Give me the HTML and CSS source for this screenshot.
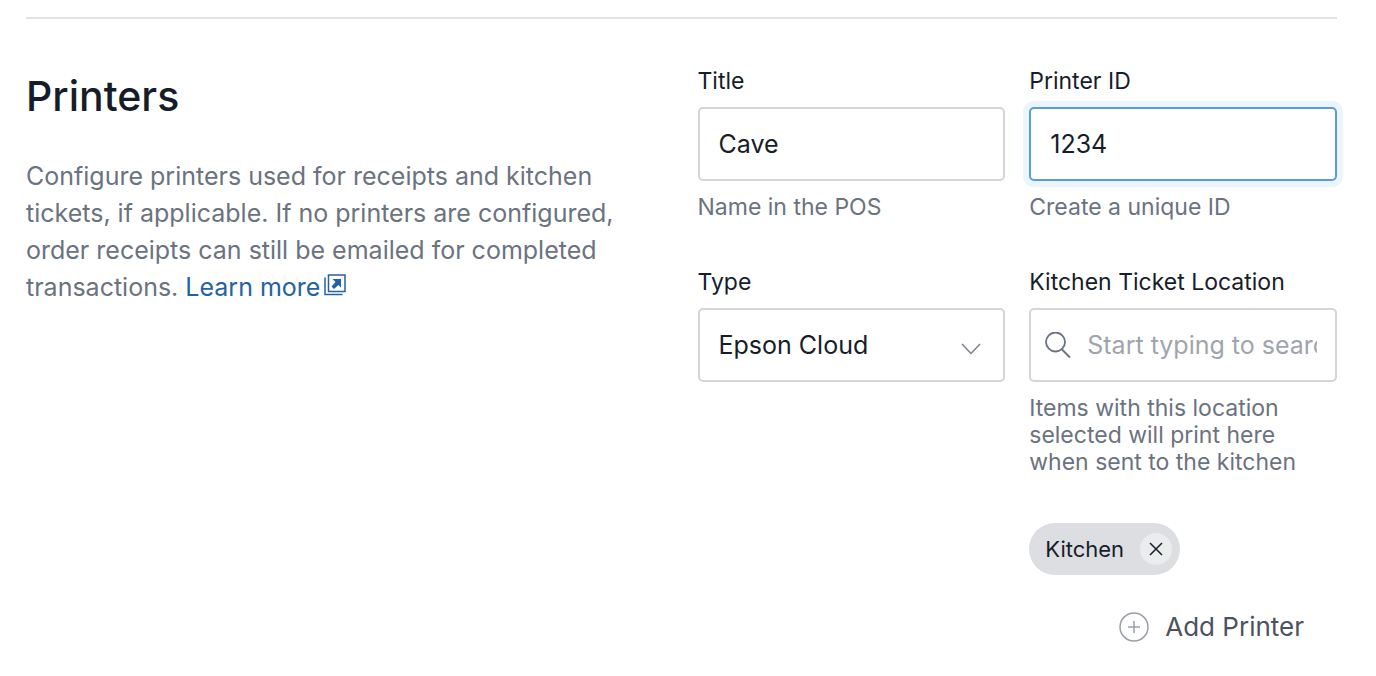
FILE: index.html
```html
<!DOCTYPE html>
<html lang="en">
<head>
  <meta charset="UTF-8" />
  <meta name="viewport" content="width=device-width, initial-scale=1" />
  <title>Printers</title>
  <link rel="stylesheet" href="styles.css">
</head>
<body>

  <section class="settings">
    <div class="intro">
      <h2>Printers</h2>
      <p>
        Configure printers used for receipts and kitchen tickets, if applicable.
        If no printers are configured, order receipts can still be emailed for
        completed transactions.
        <a href="#">Learn more<svg class="external" viewBox="0 0 22 22" aria-hidden="true">
          <path d="M4.500 1H21V17.500H4.500Z" fill="none" stroke="currentColor" stroke-width="1.500" />
          <path d="M1 3.500V20.500H18.500" fill="none" stroke="currentColor" stroke-width="1.500" />
          <path d="M8.500 5H17V13.500L14.500 11L10 15L7.500 12.500L11.500 8Z" fill="currentColor" />
        </svg></a>
      </p>
    </div>

    <form class="printer">
      <div class="field">
        <label for="title">Title</label>
        <input type="text" id="title" class="control" value="Cave" />
        <p class="hint">Name in the POS</p>
      </div>

      <div class="field">
        <label for="printerId">Printer ID</label>
        <input type="text" id="printerId" class="control active" value="1234" />
        <p class="hint">Create a unique ID</p>
      </div>

      <div class="field">
        <label for="type">Type</label>
        <div class="select-wrap">
          <select id="type" class="control">
            <option>Epson Cloud</option>
          </select>
          <svg class="chevron" viewBox="0 0 20 12" aria-hidden="true">
            <path d="M1 1L10 10.500L19 1" fill="none" stroke="currentColor" stroke-width="1.500" />
          </svg>
        </div>
      </div>

      <div class="field">
        <label for="location">Kitchen Ticket Location</label>
        <div class="control search">
          <svg viewBox="0 0 26 26" aria-hidden="true">
            <circle cx="10.500" cy="10" r="9.500" fill="none" stroke="currentColor" stroke-width="1.800" />
            <path d="M16.500 17L25 25.500" stroke="currentColor" stroke-width="2" />
          </svg>
          <input type="text" id="location" placeholder="Start typing to search" />
        </div>
        <p class="hint">Items with this location selected will print here when sent to the kitchen</p>
        <div class="chip">
          Kitchen
          <button type="button" aria-label="Remove Kitchen">
            <svg viewBox="0 0 14 14" aria-hidden="true">
              <path d="M1 1L13 13M13 1L1 13" stroke="currentColor" stroke-width="1.500" />
            </svg>
          </button>
        </div>
      </div>

      <button type="button" class="add">
        <svg viewBox="0 0 30 30" aria-hidden="true">
          <circle cx="15" cy="15" r="14" fill="none" stroke="currentColor" stroke-width="1.500" />
          <path d="M15 9V21M9 15H21" stroke="currentColor" stroke-width="1.500" />
        </svg>
        Add Printer
      </button>
    </form>
  </section>

</body>
</html>
```
FILE: styles.css
```css
* {
  box-sizing: border-box;
}

body {
  margin: 0;
  padding: 17px 39px 32px 26px;
  font-family: Inter, sans-serif;
  background: #fff;
  color: #161d2a;
}

.settings {
  display: grid;
  grid-template-columns: 1fr 1fr;
  gap: 32px;
  border-top: 2px solid #e2e3e6;
  padding-top: 48px;
}

h2 {
  margin: 4px 0 37px;
  font-size: 41px;
  line-height: 50px;
  font-weight: 500;
}

p {
  margin: 0;
}

.intro p {
  max-width: 600px;
  font-size: 25px;
  line-height: 37px;
  color: #6b7280;
}

.intro a {
  color: #2563a0;
  text-decoration: none;
}

.external {
  width: 22px;
  height: 22px;
  margin-left: 4px;
}

.printer {
  display: grid;
  grid-template-columns: 1fr 1fr;
  column-gap: 24px;
  row-gap: 47px;
}

.field {
  display: flex;
  flex-direction: column;
  min-width: 0;
}

label {
  margin-bottom: 11px;
  font-size: 23px;
  line-height: 29px;
}

.control {
  width: 100%;
  height: 74px;
  padding: 0 19px;
  border: 2px solid #d4d4da;
  border-radius: 5px;
  background: #fff;
  color: inherit;
  font-family: inherit;
  font-size: 25px;
  outline: none;
}

.control.active {
  border-color: #5a9bdc;
  box-shadow: 0 0 0 6px #ebf5fd;
}

.hint {
  margin-top: 13px;
  font-size: 23px;
  line-height: 27px;
  color: #6b7280;
}

.select-wrap {
  position: relative;
}

select.control {
  appearance: none;
}

.chevron {
  position: absolute;
  right: 24px;
  top: 35px;
  width: 20px;
  height: 12px;
  color: #7b818d;
  pointer-events: none;
}

.search {
  display: flex;
  align-items: center;
  gap: 16px;
  padding: 0 18px 0 14px;
}

.search svg {
  flex: none;
  width: 26px;
  height: 26px;
  color: #6b7280;
}

.search input {
  flex: 1;
  min-width: 0;
  padding: 0;
  border: none;
  outline: none;
  background: none;
  color: inherit;
  font: inherit;
}

.search input::placeholder {
  color: #a0a4ae;
}

.chip {
  display: flex;
  align-items: center;
  align-self: flex-start;
  gap: 16px;
  height: 52px;
  margin-top: 47px;
  padding: 0 8px 0 16px;
  border-radius: 26px;
  background: #dddee2;
  font-size: 22px;
}

.chip button {
  display: flex;
  align-items: center;
  justify-content: center;
  width: 32px;
  height: 32px;
  padding: 0;
  border: none;
  border-radius: 50%;
  background: #ebecee;
  color: inherit;
  cursor: pointer;
}

.chip svg {
  width: 14px;
  height: 14px;
}

.add {
  grid-column: 1 / -1;
  justify-self: end;
  display: flex;
  align-items: center;
  gap: 16px;
  margin-top: -12px;
  padding: 0 33px 0 0;
  border: none;
  background: none;
  color: #4b5260;
  font-family: inherit;
  font-size: 26px;
  line-height: 34px;
  cursor: pointer;
}

.add svg {
  width: 30px;
  height: 30px;
  color: #9a9fab;
}
```
